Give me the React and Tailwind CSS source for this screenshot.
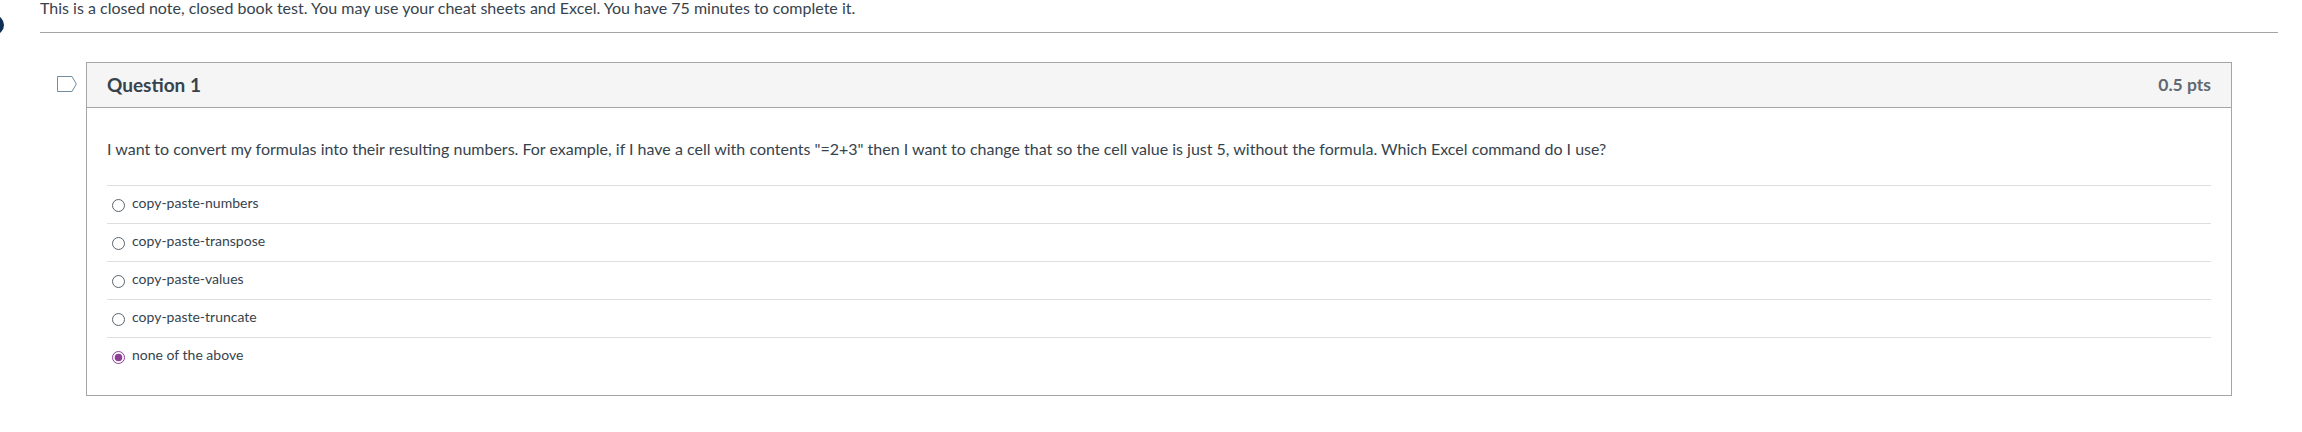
const options = [
  { label: "copy-paste-numbers" },
  { label: "copy-paste-transpose" },
  { label: "copy-paste-values" },
  { label: "copy-paste-truncate" },
  { label: "none of the above", checked: true },
];

function Radio({ checked }) {
  return (
    <svg width="13" height="13" viewBox="0 0 13 13" className="mt-[2px] shrink-0">
      <circle cx="6.5" cy="6.5" r="6" fill="#fff" stroke={checked ? "#8f3f97" : "#59636b"} strokeWidth="1" />
      {checked && <circle cx="6.5" cy="6.5" r="3.8" fill="#8f3f97" />}
    </svg>
  );
}

export default function App() {
  return (
    <div className="relative h-[432px] w-[2302px] overflow-hidden bg-white font-['Lato','Carlito','Liberation_Sans',sans-serif] text-[#36434d]">
      <div className="absolute left-[-16px] top-[15px] h-5 w-5 rounded-full bg-[#0f2f57]" />
      <div className="pl-10 pr-6">
        <p className="h-[33px] border-b border-[#a5a5a5] text-base leading-[16px]">
          This is a closed note, closed book test. You may use your cheat sheets and Excel. You have 75 minutes to complete it.
        </p>
      </div>
      <div className="mt-[29px] flex items-start">
        <div className="flex w-[86px] justify-end pr-[9px] pt-[14px]">
          <svg width="20" height="16" viewBox="0 0 20 16">
            <path d="M.5.5h14.5l4.3 7.5-4.3 7.5H.5z" fill="#fff" stroke="#6f8ea3" strokeWidth="1" />
          </svg>
        </div>
        <div className="h-[334px] w-[2146px] border border-[#a5a5a5]">
          <div className="flex h-[45px] items-center justify-between border-b border-[#a5a5a5] bg-[#f5f5f5] px-5">
            <h2 className="text-[19px] font-bold">Question 1</h2>
            <span className="text-[17.5px] font-bold text-[#5f6a72]">0.5 pts</span>
          </div>
          <div className="px-5">
            <p className="pt-[29px] pb-[24px] text-base leading-[24px]">
              I want to convert my formulas into their resulting numbers. For example, if I have a cell with contents "=2+3" then I want to change that so the cell value is just 5, without the formula. Which Excel command do I use?
            </p>
            {options.map((o) => (
              <div key={o.label} className="flex h-[38px] items-center gap-[7px] border-t border-[#dcdfe1] pl-[5px] text-sm">
                <Radio checked={o.checked} />
                <span className="mt-[-4px]">{o.label}</span>
              </div>
            ))}
          </div>
        </div>
      </div>
    </div>
  );
}
